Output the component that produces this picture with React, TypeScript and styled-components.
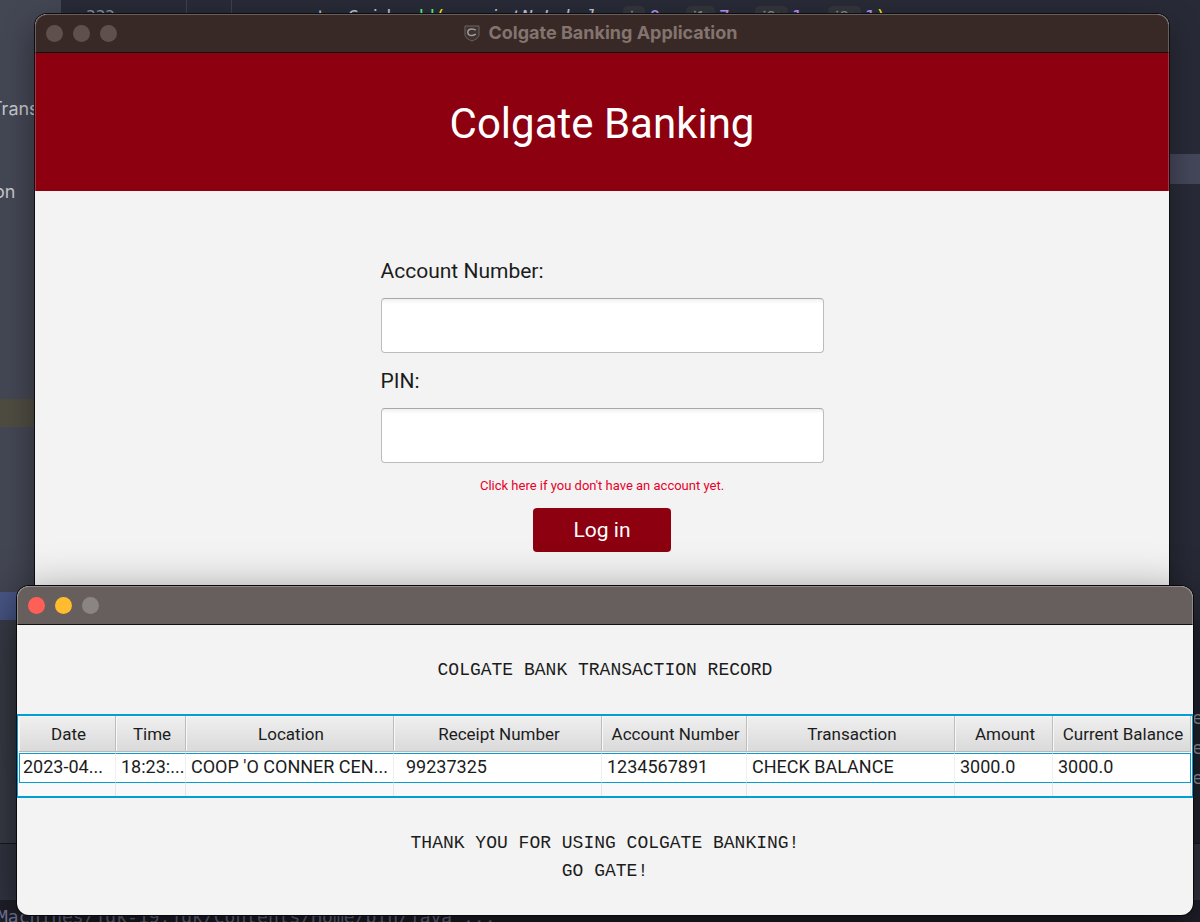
import React from 'react';
import styled, { createGlobalStyle, css } from 'styled-components';

const UI_FONT = 'Roboto, "Liberation Sans", sans-serif';
const TITLE_FONT = 'Inter, "Liberation Sans", sans-serif';
const RECEIPT_FONT = '"Liberation Mono", monospace';
const CODE_FONT = '"DejaVu Sans Mono", monospace';

const MAROON = '#8c000f';
const ACCENT = '#039ed3';

const GlobalStyle = createGlobalStyle`
  * { box-sizing: border-box; }
  body { margin: 0; background: #272a36; }
`;

const Desktop = styled.div`
  position: relative;
  display: flex;
  flex-direction: column;
  min-height: 100vh;
  overflow: hidden;
  font-family: ${CODE_FONT};
  font-size: 18px;
`;

/* ---------- editor behind the windows ---------- */

const Workspace = styled.div`
  display: flex;
  height: 620px;
`;

const Sidebar = styled.div`
  display: flex;
  flex-direction: column;
  width: 61px;
  padding-top: 95px;
  background: #434653;
  font-family: ${TITLE_FONT};
  font-size: 18px;
  line-height: 28px;
  color: #c4c5c9;
`;

const TreeItem = styled.div<{ $shift: number }>`
  margin-left: -${(p) => p.$shift}px;
  margin-bottom: 55px;
  white-space: nowrap;
`;

const TreeMark = styled.div<{ $color: string }>`
  height: 28px;
  background: ${(p) => p.$color};
`;

const TreeGap = styled.div<{ $size: number }>`
  height: ${(p) => p.$size}px;
`;

const Editor = styled.div`
  display: flex;
  flex-direction: column;
  flex: 1;
  background: #282b37;
`;

const CodeRow = styled.div`
  display: flex;
  height: 154px;
  line-height: 22px;
  padding-top: 6px;
  white-space: pre;
`;

const Gutter = styled.div`
  width: 126px;
  margin-top: -6px;
  padding: 6px 0 0 25px;
  border-right: 1px solid #3d404d;
  font-size: 16px;
  color: #8d8fa3;
`;

const FoldColumn = styled.div`
  width: 45px;
  margin-top: -6px;
  border-right: 1px solid #3d404d;
`;

const Code = styled.code`
  display: flex;
  align-items: flex-start;
  padding-left: 51px;
  font-family: inherit;
  color: #c4c4d4;
`;

const Token = styled.span<{ $color: string; $italic?: boolean }>`
  color: ${(p) => p.$color};
  font-style: ${(p) => (p.$italic ? 'italic' : 'normal')};
`;

const Hint = styled.span`
  margin: 0 4px;
  padding: 0 7px;
  border-radius: 5px;
  background: #33353a;
  font-family: ${TITLE_FONT};
  font-size: 16px;
  color: #8a8a8a;
`;

const CaretLine = styled.div`
  height: 30px;
  background: #44475a;
`;

const Console = styled.div`
  display: flex;
  justify-content: flex-end;
  flex: 1;
  padding-top: 83px;
  background: linear-gradient(90deg, #3c3f4b 0 61px, #232632 61px);
`;

const ConsoleLines = styled.div`
  margin-right: -3px;
  line-height: 30px;
  color: #a0a2b4;
`;

const ToolStrip = styled.div`
  height: 57px;
  border-top: 1px solid #171923;
  background: #353846;
`;

const Terminal = styled.div`
  height: 22px;
  padding-top: 6px;
  background: #20212c;
  line-height: 22px;
  color: #7d80a0;
  white-space: nowrap;
`;

const TerminalText = styled.div`
  margin-left: -3px;
`;

/* ---------- application windows ---------- */

const WindowFrame = styled.section<{ $active?: boolean }>`
  position: absolute;
  overflow: hidden;
  border-radius: 12px;
  background: #f3f3f3;
  font-family: ${UI_FONT};
  color: #1c1c1c;
  ${(p) =>
    p.$active
      ? css`
          top: 586px;
          left: 17px;
          right: 7px;
          box-shadow: 0 0 0 1px #08090c, 0 16px 50px rgba(0, 0, 0, 0.65);
        `
      : css`
          top: 14px;
          left: 35px;
          right: 31px;
          box-shadow: 0 0 0 1px #0d0e12, 0 12px 32px rgba(0, 0, 0, 0.4);
        `}
`;

const TitleBar = styled.header<{ $active?: boolean }>`
  display: grid;
  grid-template-columns: 1fr auto 1fr;
  align-items: center;
  height: 39px;
  padding: 0 10px;
  border: 1px solid ${(p) => (p.$active ? '#8f8a89' : '#6b5f5b')};
  border-bottom-color: #12100f;
  border-radius: 12px 12px 0 0;
  background: ${(p) => (p.$active ? '#665f5e' : '#382926')};
`;

const Lights = styled.div`
  display: flex;
  gap: 10px;
`;

const Light = styled.button<{ $color: string }>`
  width: 17px;
  height: 17px;
  padding: 0;
  border: 0;
  border-radius: 50%;
  background: ${(p) => p.$color};
`;

const WindowTitle = styled.div`
  display: flex;
  align-items: center;
  gap: 8px;
  padding: 0 2px 1px 0;
  font-family: ${TITLE_FONT};
  font-size: 18px;
  font-weight: 700;
  line-height: 24px;
  color: #83746f;
`;

const Banner = styled.div`
  display: flex;
  align-items: center;
  justify-content: center;
  height: 138px;
  padding-top: 4px;
  border: 1px solid #b03040;
  border-width: 0 1px;
  background: ${MAROON};
`;

const BannerTitle = styled.h1`
  margin: 0;
  font-size: 42px;
  font-weight: 400;
  line-height: 52px;
  color: #fff;
`;

const LoginForm = styled.form`
  display: flex;
  flex-direction: column;
  align-items: center;
  gap: 14px;
  width: 443px;
  max-width: 100%;
  margin: 0 auto;
  padding: 66px 0 200px;
`;

const FieldLabel = styled.label`
  align-self: flex-start;
  padding-top: 2px;
  font-size: 21px;
  line-height: 25px;
`;

const FieldInput = styled.input`
  width: 100%;
  height: 55px;
  padding: 0 12px;
  border: 1px solid #bcbcbc;
  border-top-color: #a8a8a8;
  border-radius: 4px;
  outline: none;
  background: linear-gradient(#f0f0f0, #fff 5px);
  font-family: inherit;
  font-size: 21px;
`;

const SignUpLink = styled.a`
  font-size: 13px;
  line-height: 17px;
  color: #e8002b;
  text-decoration: none;
`;

const LoginButton = styled.button`
  width: 138px;
  height: 44px;
  padding: 0;
  border: 0;
  border-radius: 4px;
  background: ${MAROON};
  font-family: inherit;
  font-size: 21px;
  color: #fff;
`;

const ReceiptHeading = styled.h2`
  margin: 0;
  padding: 31px 0 30px;
  font-family: ${RECEIPT_FONT};
  font-size: 18px;
  font-weight: 400;
  line-height: 28px;
  text-align: center;
`;

const ReceiptFooter = styled.footer`
  padding: 31px 0 30px;
  font-family: ${RECEIPT_FONT};
  font-size: 18px;
  line-height: 28px;
  text-align: center;
`;

const RecordFrame = styled.div`
  padding: 0 1px;
  border: 2px solid ${ACCENT};
  border-width: 2px 1px;
  background: #f9f9f9;
`;

const RecordTable = styled.table`
  width: 100%;
  table-layout: fixed;
  border-collapse: separate;
  border-spacing: 0;
`;

const Column = styled.col<{ $width: number }>`
  width: ${(p) => p.$width}px;
`;

const HeadCell = styled.th`
  height: 37px;
  padding: 0 0 0 3px;
  border-right: 1px solid #bdbdbd;
  border-bottom: 1px solid #fff;
  background: linear-gradient(#f0f0f0, #d9d9d9);
  box-shadow: inset 0 -1px #b9b9b9, inset 1px 1px #f8f8f8;
  font-size: 17px;
  font-weight: 400;
  line-height: 20px;
  white-space: nowrap;
`;

const DataCell = styled.td<{ $indent?: boolean }>`
  height: 30px;
  padding: 0 0 2px ${(p) => (p.$indent ? 12 : 5)}px;
  border-top: 1px solid ${ACCENT};
  border-bottom: 1px solid ${ACCENT};
  border-right: 1px solid #f0f0f0;
  overflow: hidden;
  background: #fff;
  font-size: 18px;
  line-height: 20px;
  white-space: nowrap;

  &:first-child {
    padding-left: 3px;
    border-left: 1px solid ${ACCENT};
  }
  &:last-child {
    border-right-color: ${ACCENT};
  }
`;

const EmptyCell = styled.td`
  height: 13px;
  padding: 0;
  border-right: 1px solid #e6e6e6;
`;

const Crest = () => (
  <svg width="16" height="17" viewBox="0 0 16 17" fill="none" aria-hidden="true">
    <path
      d="M1 1h14v8.500c0 3.200-3.200 5-7 6.500-3.800-1.500-7-3.300-7-6.500z"
      fill="#3d3331"
      stroke="#6e6462"
      strokeWidth="1"
    />
    <path
      d="M11.800 5.300C10.900 4.300 9.500 3.900 8 3.900c-2.400 0-4.200 1.400-4.200 3.300s1.800 3.300 4.200 3.300c1.500 0 2.900-.4 3.800-1.400"
      stroke="#a59a97"
      strokeWidth="1.500"
    />
  </svg>
);

const record = [
  { name: 'Date', width: 97, value: '2023-04...' },
  { name: 'Time', width: 70, value: '18:23:...' },
  { name: 'Location', width: 208, value: "COOP 'O CONNER CEN..." },
  { name: 'Receipt Number', width: 208, value: '99237325', indent: true },
  { name: 'Account Number', width: 145, value: '1234567891' },
  { name: 'Transaction', width: 208, value: 'CHECK BALANCE' },
  { name: 'Amount', width: 98, value: '3000.0' },
  { name: 'Current Balance', width: 138, value: '3000.0' },
];

const WindowLights = ({ colors }: { colors: string[] }) => (
  <Lights>
    {['Close', 'Minimize', 'Zoom'].map((label, i) => (
      <Light key={label} type="button" aria-label={label} $color={colors[i]} />
    ))}
  </Lights>
);

const EditorBackdrop = () => (
  <>
    <Workspace>
      <Sidebar>
        <TreeItem $shift={9}>Trans</TreeItem>
        <TreeItem $shift={6}>on</TreeItem>
        <TreeGap $size={138} />
        <TreeMark $color="#4e4b41" />
        <TreeGap $size={165} />
        <TreeMark $color="#4a5889" />
      </Sidebar>
      <Editor>
        <CodeRow>
          <Gutter>332</Gutter>
          <FoldColumn />
          <Code>
            centerGrid.
            <Token $color="#50fa7b">add</Token>
            <Token $color="#f5f50a">(</Token>
            <Token $color="#c4c4d4" $italic>
              {'receiptNoLabel, '}
            </Token>
            <Hint>i:</Hint>
            <Token $color="#bd93f9">0, </Token>
            <Hint>i1:</Hint>
            <Token $color="#bd93f9">7, </Token>
            <Hint>i2:</Hint>
            <Token $color="#bd93f9">1, </Token>
            <Hint>i3:</Hint>
            <Token $color="#bd93f9">1</Token>
            <Token $color="#f5f50a">)</Token>;
          </Code>
        </CodeRow>
        <CaretLine />
      </Editor>
    </Workspace>
    <Console>
      <ConsoleLines>
        <div>e</div>
        <div>e</div>
        <div>e</div>
      </ConsoleLines>
    </Console>
    <ToolStrip />
    <Terminal>
      <TerminalText>Machines/jdk-19.jdk/Contents/Home/bin/java ...</TerminalText>
    </Terminal>
  </>
);

const LoginWindow = () => (
  <WindowFrame>
    <TitleBar>
      <WindowLights colors={['#5f504d', '#5f504d', '#5f504d']} />
      <WindowTitle>
        <Crest />
        Colgate Banking Application
      </WindowTitle>
    </TitleBar>
    <Banner>
      <BannerTitle>Colgate Banking</BannerTitle>
    </Banner>
    <LoginForm onSubmit={(e) => e.preventDefault()}>
      <FieldLabel htmlFor="account">Account Number:</FieldLabel>
      <FieldInput id="account" type="text" />
      <FieldLabel htmlFor="pin">PIN:</FieldLabel>
      <FieldInput id="pin" type="password" />
      <SignUpLink href="#signup">Click here if you don't have an account yet.</SignUpLink>
      <LoginButton type="submit">Log in</LoginButton>
    </LoginForm>
  </WindowFrame>
);

const ReceiptWindow = () => (
  <WindowFrame $active>
    <TitleBar $active>
      <WindowLights colors={['#ff5f57', '#febc2e', '#8a8583']} />
    </TitleBar>
    <ReceiptHeading>COLGATE BANK TRANSACTION RECORD</ReceiptHeading>
    <RecordFrame>
      <RecordTable>
        <colgroup>
          {record.map((c) => (
            <Column key={c.name} $width={c.width} />
          ))}
        </colgroup>
        <thead>
          <tr>
            {record.map((c) => (
              <HeadCell key={c.name} scope="col">
                {c.name}
              </HeadCell>
            ))}
          </tr>
        </thead>
        <tbody>
          <tr>
            {record.map((c) => (
              <DataCell key={c.name} $indent={c.indent}>
                {c.value}
              </DataCell>
            ))}
          </tr>
          <tr>
            {record.map((c) => (
              <EmptyCell key={c.name} />
            ))}
          </tr>
        </tbody>
      </RecordTable>
    </RecordFrame>
    <ReceiptFooter>
      <div>THANK YOU FOR USING COLGATE BANKING!</div>
      <div>GO GATE!</div>
    </ReceiptFooter>
  </WindowFrame>
);

export default function App() {
  return (
    <>
      <GlobalStyle />
      <Desktop>
        <EditorBackdrop />
        <LoginWindow />
        <ReceiptWindow />
      </Desktop>
    </>
  );
}
